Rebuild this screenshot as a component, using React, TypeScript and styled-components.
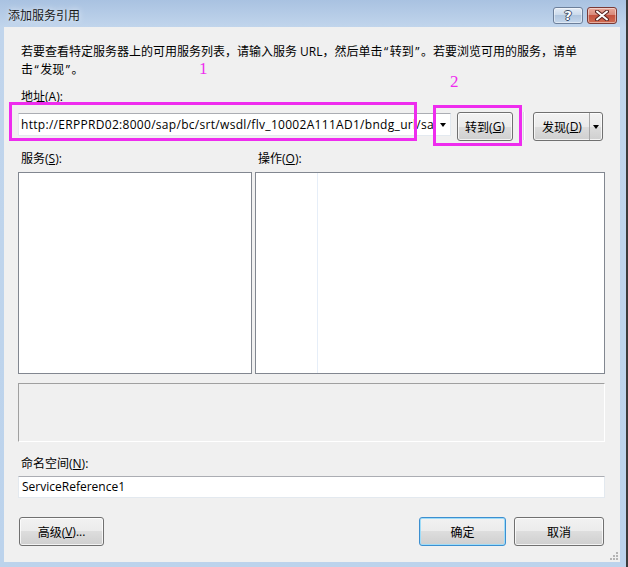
import styled, { createGlobalStyle, css } from "styled-components";

const GlobalStyle = createGlobalStyle`
  html, body {
    margin: 0;
    padding: 0;
    background: #3b3b3b;
  }
  body {
    font-family: "Open Sans", "Noto Sans CJK SC", sans-serif;
    font-size: 12px;
    color: #000;
  }
`;

const Frame = styled.div`
  position: relative;
  width: 626px;
  height: 567px;
  box-sizing: border-box;
  padding: 0 6px 5px 4px;
  display: flex;
  flex-direction: column;
  background: linear-gradient(180deg, #a9c2e1 0px, #c1d5ec 27px, #bcd3ec 100%);
`;

const TitleBar = styled.div`
  height: 27px;
  display: flex;
  align-items: flex-start;
  padding-right: 3px;
`;

const Title = styled.span`
  font-family: "Noto Sans CJK SC", sans-serif;
  font-size: 12px;
  line-height: 18px;
  margin-top: 6px;
  margin-left: 4px;
  flex: 1;
  color: #1a1a1a;
  text-shadow: 0 0 6px rgba(255, 255, 255, 0.9);
`;

const CaptionButton = styled.div<{ $close?: boolean }>`
  width: 30px;
  height: 17px;
  margin-top: 7px;
  margin-left: 4px;
  box-sizing: border-box;
  border: 1px solid ${(p) => (p.$close ? "#7a3a36" : "#6c7f9a")};
  border-radius: 3px;
  display: flex;
  align-items: center;
  justify-content: center;
  box-shadow: inset 0 0 0 1px rgba(255, 255, 255, 0.45);
  background: ${(p) =>
    p.$close
      ? "linear-gradient(180deg, #e9a99b 0%, #d88a7b 45%, #c4523f 50%, #cf6a50 100%)"
      : "linear-gradient(180deg, #e4ecf6 0%, #ccdbec 45%, #b1c6df 50%, #c5d7ec 100%)"};
`;

const HelpGlyph = styled.span`
  font-family: "DejaVu Sans", sans-serif;
  font-weight: bold;
  font-size: 13px;
  line-height: 13px;
  color: #fff;
  text-shadow: -1px 0 #3d4d66, 1px 0 #3d4d66, 0 -1px #3d4d66, 0 1px #3d4d66;
`;

const Client = styled.div`
  position: relative;
  flex: 1;
  background: #f0f0f0;
  padding: 16px 15px 0 14px;
  display: flex;
  flex-direction: column;
  font-family: "Open Sans", "Noto Sans CJK SC", sans-serif;
`;

const Desc = styled.div`
  padding-left: 3px;
  line-height: 18px;
  white-space: nowrap;
`;

const Quote = styled.span`
  margin: 0 1.5px;
`;

const Label = styled.div<{ $mt: number }>`
  margin-top: ${(p) => p.$mt}px;
  padding-left: 3px;
  line-height: 18px;
`;

const AddressRow = styled.div`
  margin-top: 6px;
  display: flex;
  align-items: flex-start;
`;

const fieldBorder = css`
  box-sizing: border-box;
  background: #fff;
  border: 1px solid #e3e9ef;
  border-top-color: #abadb3;
`;

const Combo = styled.div`
  ${fieldBorder};
  margin-top: 1px;
  width: 433px;
  height: 23px;
  display: flex;
`;

const ComboText = styled.div`
  flex: 1;
  overflow: hidden;
  white-space: nowrap;
  padding-left: 2px;
  line-height: 21px;
  letter-spacing: 0.3px;
`;

const ComboArrow = styled.div`
  width: 15px;
  border-left: 1px solid #e8ecf0;
  display: flex;
  align-items: center;
  justify-content: center;
`;

const Triangle = styled.span`
  width: 0;
  height: 0;
  border-left: 3.5px solid transparent;
  border-right: 3.5px solid transparent;
  border-top: 4px solid #000;
`;

const buttonFace = css`
  box-sizing: border-box;
  border: 1px solid #707070;
  border-radius: 3px;
  background: linear-gradient(180deg, #f2f2f2 0%, #ebebeb 50%, #dddddd 50%, #cfcfcf 100%);
  box-shadow: inset 0 0 0 1px rgba(255, 255, 255, 0.75);
`;

const Button = styled.div<{ $w: number; $default?: boolean; $ml?: number }>`
  ${buttonFace};
  width: ${(p) => p.$w}px;
  height: 29px;
  margin-left: ${(p) => p.$ml ?? 0}px;
  display: flex;
  align-items: center;
  justify-content: center;
  font-size: 12px;
  white-space: nowrap;
  ${(p) =>
    p.$default &&
    css`
      border-color: #3c8fd0;
      box-shadow: inset 0 0 0 1px #9fdcf8;
    `}
`;

const Separator = styled.div`
  width: 1px;
  height: 28px;
  margin-left: 10px;
  background: #d6dbe0;
  box-shadow: 1px 0 #fff;
`;

const SplitButton = styled.div`
  ${buttonFace};
  width: 70px;
  height: 29px;
  margin-left: 9px;
  display: flex;
`;

const SplitMain = styled.div`
  flex: 1;
  display: flex;
  align-items: center;
  justify-content: center;
  padding-left: 1px;
  white-space: nowrap;
`;

const SplitArrow = styled.div`
  width: 12px;
  border-left: 1px solid #a8a8a8;
  display: flex;
  align-items: center;
  justify-content: center;
`;

const ListLabels = styled.div`
  margin-top: 9px;
  display: grid;
  grid-template-columns: 237px 1fr;
  line-height: 18px;
  padding-left: 3px;
`;

const Lists = styled.div`
  margin-top: 4px;
  display: grid;
  grid-template-columns: 234px 1fr;
  column-gap: 3px;
  height: 202px;
`;

const ListBox = styled.div`
  box-sizing: border-box;
  background: #fff;
  border: 1px solid #828790;
  display: flex;
`;

const ListColumn = styled.div`
  width: 61px;
  border-right: 1px solid #e6eef8;
`;

const InfoBox = styled.div`
  margin-top: 9px;
  height: 59px;
  box-sizing: border-box;
  border: 1px solid #a0a0a0;
  border-right-color: #fff;
  border-bottom-color: #fff;
`;

const TextBox = styled.div`
  ${fieldBorder};
  margin-top: 3px;
  height: 22px;
  padding-left: 3px;
  line-height: 20px;
`;

const Footer = styled.div`
  margin-top: 19px;
  display: flex;
  padding: 0 1px;
`;

const Spacer = styled.div`
  flex: 1;
`;

const Grip = styled.svg`
  position: absolute;
  right: 2px;
  bottom: 2px;
`;

const Annotation = styled.div<{ $x: number; $y: number; $w: number; $h: number }>`
  position: absolute;
  left: ${(p) => p.$x}px;
  top: ${(p) => p.$y}px;
  width: ${(p) => p.$w}px;
  height: ${(p) => p.$h}px;
  box-sizing: border-box;
  border: 3px solid #ee2cee;
  pointer-events: none;
`;

const Mark = styled.span<{ $x: number; $y: number }>`
  position: absolute;
  left: ${(p) => p.$x}px;
  top: ${(p) => p.$y}px;
  font-family: "Liberation Serif", serif;
  font-size: 17px;
  line-height: 17px;
  color: #ee2cee;
`;

export default function App() {
  return (
    <>
      <GlobalStyle />
      <Frame>
        <TitleBar>
          <Title>添加服务引用</Title>
          <CaptionButton>
            <HelpGlyph>?</HelpGlyph>
          </CaptionButton>
          <CaptionButton $close>
            <svg width="14" height="11" viewBox="0 0 14 11">
              <path d="M2 1.5 L12 9.5 M12 1.5 L2 9.5" stroke="#5a2420" strokeWidth="4" strokeLinecap="round" />
              <path d="M2 1.5 L12 9.5 M12 1.5 L2 9.5" stroke="#fff" strokeWidth="2" strokeLinecap="round" />
            </svg>
          </CaptionButton>
        </TitleBar>
        <Client>
          <Desc>
            若要查看特定服务器上的可用服务列表，请输入服务 URL，然后单击<Quote>“</Quote>转到<Quote>”</Quote>。若要浏览可用的服务，请单
            <br />
            击<Quote>“</Quote>发现<Quote>”</Quote>。
          </Desc>
          <Label $mt={9}>
            地址(<u>A</u>):
          </Label>
          <AddressRow>
            <Combo>
              <ComboText>http://ERPPRD02:8000/sap/bc/srt/wsdl/flv_10002A111AD1/bndg_url/sap</ComboText>
              <ComboArrow>
                <Triangle />
              </ComboArrow>
            </Combo>
            <Button $w={56} $ml={6}>
              转到(<u>G</u>)
            </Button>
            <Separator />
            <SplitButton>
              <SplitMain>
                发现(<u>D</u>)
              </SplitMain>
              <SplitArrow>
                <Triangle />
              </SplitArrow>
            </SplitButton>
          </AddressRow>
          <ListLabels>
            <span>
              服务(<u>S</u>):
            </span>
            <span>
              操作(<u>O</u>):
            </span>
          </ListLabels>
          <Lists>
            <ListBox />
            <ListBox>
              <ListColumn />
            </ListBox>
          </Lists>
          <InfoBox />
          <Label $mt={13}>
            命名空间(<u>N</u>):
          </Label>
          <TextBox>ServiceReference1</TextBox>
          <Footer>
            <Button $w={85}>
              高级(<u>V</u>)...
            </Button>
            <Spacer />
            <Button $w={87} $default>
              确定
            </Button>
            <Button $w={90} $ml={8}>
              取消
            </Button>
          </Footer>
          <Grip width="10" height="10" viewBox="0 0 10 10">
            {[
              [8, 0],
              [8, 3],
              [5, 3],
              [8, 6],
              [5, 6],
              [2, 6],
            ].map(([x, y]) => (
              <rect key={`${x}-${y}`} x={x} y={y + 2} width="2" height="2" fill="#b4b4b4" />
            ))}
          </Grip>
        </Client>
        <Annotation $x={9} $y={102} $w={408} $h={39} />
        <Annotation $x={433} $y={105} $w={89} $h={41} />
        <Mark $x={199} $y={60}>1</Mark>
        <Mark $x={450} $y={73}>2</Mark>
      </Frame>
    </>
  );
}
